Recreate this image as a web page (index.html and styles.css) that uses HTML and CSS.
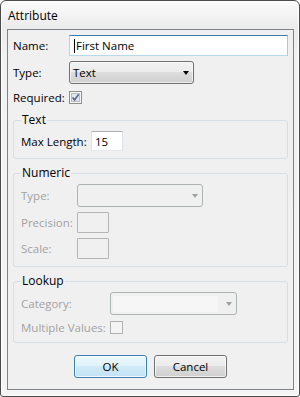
FILE: index.html
```html
<!DOCTYPE html>
<html>
<head>
    <title>Attribute</title>
    <link rel="stylesheet" href="styles.css">
</head>
<body>
    <div class="window">
        <div class="title-bar">Attribute</div>
        <div class="client">
            <div class="rows top-rows">
                <label>Name:</label>
                <div class="textbox focused"><span class="caret"></span>First Name</div>

                <label>Type:</label>
                <div class="combo combo-type">
                    <span class="combo-text">Text</span>
                    <span class="arrow"></span>
                </div>

                <label>Required:</label>
                <div class="checkbox">
                    <svg width="13" height="13" viewBox="0 0 13 13">
                        <rect x="0.5" y="0.5" width="12" height="12" fill="#f6f6f6" stroke="#8f8f8f"/>
                        <rect x="2.5" y="2.5" width="8" height="8" fill="#e2e5ea" stroke="#b8bcc2"/>
                        <path d="M3.6 6.4 L5.6 9 L9.6 3.4" stroke="#4c5f92" stroke-width="1.6" fill="none"/>
                    </svg>
                </div>
            </div>

            <fieldset class="group">
                <legend>Text</legend>
                <div class="rows text-rows">
                    <label>Max Length:</label>
                    <div class="textbox small">15</div>
                </div>
            </fieldset>

            <fieldset class="group disabled">
                <legend>Numeric</legend>
                <div class="rows numeric-rows">
                    <label>Type:</label>
                    <div class="combo combo-numeric"><span class="arrow"></span></div>

                    <label>Precision:</label>
                    <div class="textbox small"></div>

                    <label>Scale:</label>
                    <div class="textbox small"></div>
                </div>
            </fieldset>

            <fieldset class="group disabled">
                <legend>Lookup</legend>
                <div class="rows lookup-rows">
                    <label>Category:</label>
                    <div class="combo combo-category">
                        <span class="combo-field"></span>
                        <span class="arrow"></span>
                    </div>

                    <label>Multiple Values:</label>
                    <div class="checkbox">
                        <svg width="13" height="13" viewBox="0 0 13 13">
                            <rect x="0.5" y="0.5" width="12" height="12" fill="#f4f4f4" stroke="#b1b1b1"/>
                        </svg>
                    </div>
                </div>
            </fieldset>

            <div class="buttons">
                <button type="button" class="btn btn-default">OK</button>
                <button type="button" class="btn">Cancel</button>
            </div>
        </div>
    </div>
</body>
</html>
```

FILE: styles.css
```css
body {
    margin: 0;
    font-family: "Open Sans", "Noto Sans", sans-serif;
    font-size: 11.5px;
    color: #000;
}
.window {
    width: 300px;
    height: 397px;
    box-sizing: border-box;
    border: 1px solid #4a4a4a;
    border-radius: 6px 6px 3px 3px;
    background: linear-gradient(to bottom, #fbfbfb 0, #ececec 26px, #f2f2f2 60px, #f4f4f4 100%);
    box-shadow: inset 1px 1px 0 #fff, inset -1px -1px 0 #fff;
    padding: 0 5px 6px 6px;
    display: flex;
    flex-direction: column;
}
.title-bar {
    height: 28px;
    display: flex;
    align-items: center;
    padding-left: 1px;
    font-size: 12px;
}
.client {
    flex: 1;
    border: 1px solid #7f848c;
    background: #f0f0f0;
    padding: 5px 5px 0 5px;
}
.rows {
    display: grid;
    align-items: center;
}
.top-rows {
    grid-template-columns: 56px 1fr;
    grid-template-rows: 21px 23px 17px;
    row-gap: 5px;
}
.text-rows {
    grid-template-columns: 70px 32px;
    grid-template-rows: 20px;
}
.numeric-rows {
    grid-template-columns: 56px 1fr;
    grid-template-rows: 23px 21px 21px;
    row-gap: 5px;
}
.lookup-rows {
    grid-template-columns: 89px 1fr;
    grid-template-rows: 23px 17px;
    row-gap: 4px;
}
label {
    white-space: nowrap;
}
.textbox {
    height: 100%;
    box-sizing: border-box;
    background: #fff;
    border: 1px solid;
    border-color: #abadb3 #dbdfe6 #e3e9ef #e2e3ea;
    padding: 0 3px;
    display: flex;
    align-items: center;
}
.textbox.focused {
    border-color: #3d7bad #a4c9e3 #b7d9ed #b5cfe7;
    padding-left: 4px;
}
.caret {
    width: 1px;
    height: 14px;
    background: #000;
    margin-right: 1px;
}
.textbox.small {
    width: 32px;
}
.combo {
    height: 23px;
    box-sizing: border-box;
    border: 1px solid #707070;
    border-radius: 3px;
    display: flex;
    align-items: center;
    padding: 0 4px 0 3px;
}
.combo-type {
    width: 125px;
    background: linear-gradient(to bottom, #f2f2f2 0, #ebebeb 50%, #dddddd 50%, #cfcfcf 100%);
    box-shadow: inset 0 0 0 1px rgba(255,255,255,0.6);
}
.combo-text {
    flex: 1;
}
.arrow {
    margin-left: auto;
    width: 0;
    height: 0;
    border-left: 3.5px solid transparent;
    border-right: 3.5px solid transparent;
    border-top: 4px solid #000;
}
.combo-numeric {
    width: 126px;
}
.combo-category {
    width: 127px;
    padding-left: 2px;
}
.combo-field {
    width: 105px;
    height: 16px;
    background: #f6f6f6;
}
.group {
    margin: 7px 0 0;
    border: 1px solid #d5dfe5;
    border-radius: 3px;
    padding: 4px 6px 7px 7px;
}
.group:last-of-type {
    padding-bottom: 6px;
}
legend {
    padding: 0 1px;
    font-size: 12px;
    line-height: 14px;
}
.disabled label {
    color: #a2a2a2;
}
.disabled .combo {
    border-color: #adb2b5;
    background: #f0f0f0;
}
.disabled .arrow {
    border-top-color: #a0a0a0;
}
.disabled .textbox {
    background: #f0f0f0;
    border-color: #b5b5b5;
    border-radius: 1px;
}
.checkbox {
    display: flex;
    align-items: center;
}
.buttons {
    display: flex;
    justify-content: center;
    gap: 7px;
    margin-top: 12px;
}
.btn {
    width: 73px;
    height: 23px;
    padding: 0;
    font-family: inherit;
    font-size: 11.5px;
    color: #000;
    border: 1px solid #707070;
    border-radius: 3px;
    background: linear-gradient(to bottom, #f2f2f2 0, #ebebeb 50%, #dddddd 50%, #cfcfcf 100%);
    box-shadow: inset 0 0 0 1px rgba(255,255,255,0.7);
}
.btn-default {
    border-color: #3c7fb1;
    background: linear-gradient(to bottom, #eef7fd 0, #e0f1fb 50%, #d0eaf8 50%, #c2e3f5 100%);
    box-shadow: inset 0 0 0 1px rgba(255,255,255,0.8);
}
```
